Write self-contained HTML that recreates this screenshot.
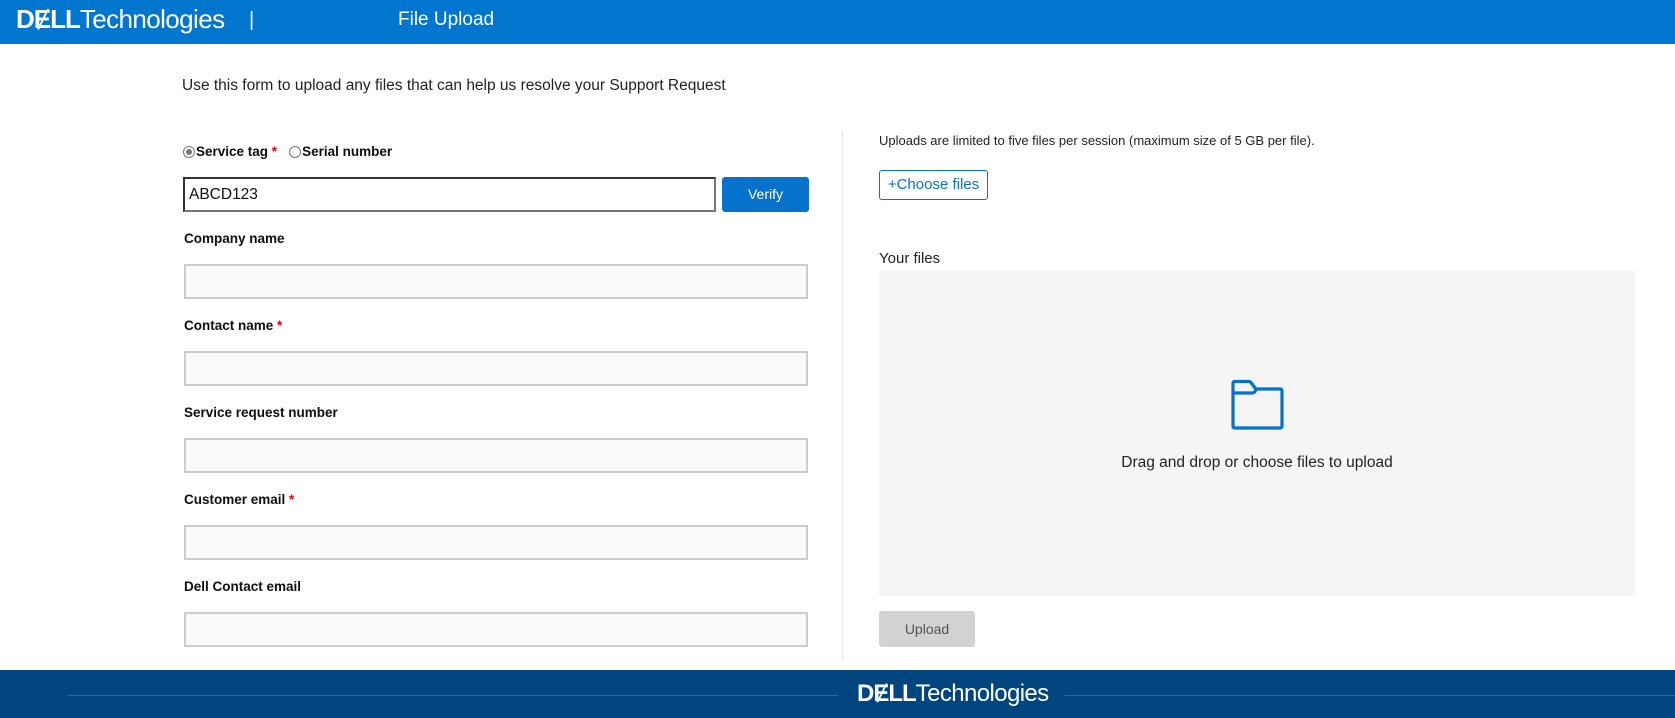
<!DOCTYPE html>
<html><head><meta charset="utf-8"><style>
*{box-sizing:border-box;margin:0;padding:0}
body{width:1675px;height:718px;position:relative;overflow:hidden;background:#fff;font-family:"Liberation Sans",Arial,sans-serif;color:#0e0e0e}
.abs{position:absolute}
.hdr{left:0;top:0;width:1675px;height:44px;background:#0076ce}
.logo{color:#fff;font-size:26px;letter-spacing:-0.6px;white-space:nowrap}
.logo b{font-weight:900;letter-spacing:-1px}
.lbl{font-size:13.5px;font-weight:bold;left:184px}
.req{color:#e00}
.inp{left:184px;width:624px;height:35px;background:#f9f9f9;border:2px solid #ccc}
</style></head><body>
<div class="abs hdr"></div>
<div class="abs logo" style="left:16px;top:4px"><b>D&#x0246;LL</b>Technologies</div>
<div class="abs" style="left:249px;top:9px;color:#fff;font-size:20px">|</div>
<div class="abs" style="left:398px;top:9px;color:#fff;font-size:19px">File Upload</div>

<div class="abs" style="left:182px;top:77px;font-size:15.5px;color:#222">Use this form to upload any files that can help us resolve your Support Request</div>

<div class="abs" style="left:183px;top:144px;font-size:13.5px;font-weight:bold;display:flex;align-items:center">
<span style="width:12px;height:12px;border:1px solid #777;border-radius:50%;display:inline-block;position:relative;margin-right:1px"><span style="position:absolute;left:2px;top:2px;width:6px;height:6px;border-radius:50%;background:#777"></span></span>Service tag&nbsp;<span class="req">*</span>
<span style="width:12px;height:12px;border:1px solid #777;border-radius:50%;display:inline-block;margin-left:12px;margin-right:1px"></span>Serial number</div>

<div class="abs" style="left:183px;top:177px;width:533px;height:35px;border:2px solid #333;border-bottom-color:#777;border-right-color:#777;font-size:15.5px;padding:7px 4px">ABCD123</div>
<div class="abs" style="left:722px;top:177px;width:87px;height:35px;background:#0672cb;border-radius:3px;color:#fff;font-size:14px;text-align:center;line-height:35px">Verify</div>

<div class="abs lbl" style="top:231px">Company name</div>
<div class="abs inp" style="top:264px"></div>
<div class="abs lbl" style="top:318px">Contact name <span class="req">*</span></div>
<div class="abs inp" style="top:351px"></div>
<div class="abs lbl" style="top:405px">Service request number</div>
<div class="abs inp" style="top:438px"></div>
<div class="abs lbl" style="top:492px">Customer email <span class="req">*</span></div>
<div class="abs inp" style="top:525px"></div>
<div class="abs lbl" style="top:579px">Dell Contact email</div>
<div class="abs inp" style="top:612px"></div>

<div class="abs" style="left:842px;top:130px;width:1px;height:530px;background:#e4e4e4"></div>

<div class="abs" style="left:879px;top:133px;font-size:13px;color:#222">Uploads are limited to five files per session (maximum size of 5 GB per file).</div>
<div class="abs" style="left:879px;top:170px;width:109px;height:30px;border:1px solid #0672cb;border-radius:3px;color:#0672cb;font-size:15px;text-align:center;line-height:28px">+Choose files</div>
<div class="abs" style="left:879px;top:250px;font-size:15px;color:#222">Your files</div>
<div class="abs" style="left:879px;top:271px;width:756px;height:325px;background:#f5f5f5"></div>
<svg class="abs" style="left:1229px;top:379px" width="56" height="52" viewBox="0 0 56 52"><path d="M4 4.5 Q4 2.5 6 2.5 H20 Q21 2.5 22 3.5 L26 9 Q27 10 28.5 10 H51 Q53 10 53 12 V47 Q53 49 51 49 H6 Q4 49 4 47 Z M4 14 H23 Q25 14 26 12.5 L27 10.5" fill="none" stroke="#0672cb" stroke-width="3.2" stroke-linejoin="round"/></svg>
<div class="abs" style="left:879px;top:454px;width:756px;text-align:center;font-size:15.5px;color:#222">Drag and drop or choose files to upload</div>
<div class="abs" style="left:879px;top:611px;width:96px;height:36px;background:#d2d2d2;border-radius:3px;color:#555;font-size:14px;text-align:center;line-height:36px">Upload</div>

<div class="abs" style="left:0;top:670px;width:1675px;height:48px;background:#00457e"></div>
<div class="abs" style="left:68px;top:695px;width:770px;height:1px;background:#0a70c4"></div>
<div class="abs" style="left:1065px;top:695px;width:610px;height:1px;background:#0a70c4"></div>
<div class="abs logo" style="left:857px;top:680px;font-size:24px"><b>D&#x0246;LL</b>Technologies</div>
</body></html>
